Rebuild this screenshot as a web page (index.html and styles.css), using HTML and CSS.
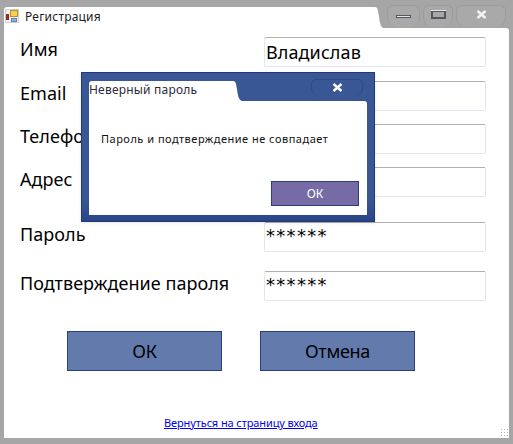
FILE: index.html
```html
<!DOCTYPE html>
<html lang="ru">
<head>
  <meta charset="UTF-8">
  <title>Регистрация</title>
  <link rel="stylesheet" href="styles.css">
</head>
<body>

<div class="window">
  <div class="titlebar">
    <div class="title">
      <svg class="app-icon" width="14" height="14" viewBox="0 0 14 14">
        <rect x="0.5" y="0.5" width="13" height="13" fill="#f4f4f4" stroke="#cfcfcf"/>
        <rect x="1.5" y="5.5" width="2" height="5" fill="#c8201a" stroke="#8a2a20"/>
        <rect x="5.5" y="1.5" width="7" height="6" fill="#f6cf55" stroke="#b8902b"/>
        <rect x="6.5" y="9.5" width="5" height="3" fill="#8fb2e8" stroke="#5f82c0"/>
      </svg>
      <span>Регистрация</span>
    </div>
    <svg class="tab-curve" width="8" height="21" viewBox="0 0 8 21">
      <path d="M0 0 C3 0 3 4 4 10 C5 17 6 20 8 21 L0 21 Z" fill="#fff"/>
    </svg>
    <div class="caption-buttons">
      <div class="caption-btn minimize">
        <svg width="15" height="3" viewBox="0 0 15 3"><rect x="0.5" y="0.5" width="14" height="2" fill="#e8e8ec" stroke="#55555f"/></svg>
      </div>
      <div class="caption-btn maximize">
        <svg width="15" height="9" viewBox="0 0 15 9"><rect x="1" y="1" width="13" height="7" fill="none" stroke="#55555f" stroke-width="2"/><rect x="0" y="0" width="15" height="1" fill="#e8e8ec"/></svg>
      </div>
      <div class="caption-btn close">
        <svg width="11" height="9" viewBox="0 0 11 9"><path d="M1.5 1 L9.5 8 M9.5 1 L1.5 8" stroke="#f4f4f4" stroke-width="2.4"/></svg>
      </div>
    </div>
  </div>

  <div class="content">
    <div class="row">
      <label>Имя</label>
      <input type="text" value="Владислав">
    </div>
    <div class="row row-email">
      <label>Email</label>
      <input type="text">
    </div>
    <div class="row">
      <label>Телефон</label>
      <input type="text">
    </div>
    <div class="row">
      <label>Адрес</label>
      <input type="text">
    </div>
    <div class="row row-password">
      <label>Пароль</label>
      <input class="secret" type="text" value="******">
    </div>
    <div class="row row-confirm">
      <label>Подтверждение пароля</label>
      <input class="secret" type="text" value="******">
    </div>

    <div class="actions">
      <button class="btn">ОК</button>
      <button class="btn">Отмена</button>
    </div>

    <a class="back-link" href="#">Вернуться на страницу входа</a>
  </div>
  <div class="grip"></div>

  <div class="dialog">
    <div class="dialog-head">
      <div class="dialog-title">Неверный пароль</div>
      <svg class="tab-curve" width="9" height="20" viewBox="0 0 9 20">
        <path d="M0 0 C3 0 3 3 4 8 C5 16 6 19 9 20 L0 20 Z" fill="#fff"/>
      </svg>
      <div class="dialog-close">
        <svg width="11" height="9" viewBox="0 0 11 9"><path d="M1.5 1 L9.5 8 M9.5 1 L1.5 8" stroke="#fff" stroke-width="2.4"/></svg>
      </div>
    </div>
    <div class="dialog-body">
      <p>Пароль и подтверждение не совпадает</p>
      <button class="dialog-ok">ОК</button>
    </div>
  </div>
</div>

</body>
</html>
```

FILE: styles.css
```css
* {
  box-sizing: border-box;
}

body {
  margin: 0;
  width: 513px;
  height: 444px;
  overflow: hidden;
  background: #a6a6a6;
  font-family: "DejaVu Sans", sans-serif;
}

.window {
  position: relative;
  width: 513px;
  height: 438px;
  padding: 7px 4px 0;
}

.titlebar {
  display: flex;
  height: 21px;
}

.title {
  display: flex;
  align-items: center;
  gap: 6px;
  width: 371px;
  padding: 0 0 3px 1px;
  background: #fff;
  border-radius: 3px 0 0 0;
  font-family: "Noto Sans", sans-serif;
  font-size: 12px;
  letter-spacing: 0.2px;
  color: #222;
}

.tab-curve {
  flex: none;
  display: block;
}

.caption-buttons {
  display: flex;
  gap: 3px;
  margin-left: 4px;
  margin-top: -2px;
}

.caption-btn {
  display: flex;
  justify-content: center;
  align-items: center;
  height: 22px;
  border: 1px solid #9c9c9c;
  border-bottom: none;
  border-radius: 6px 6px 10px 10px;
  background: #a9a9a9;
}

.minimize {
  width: 33px;
}

.maximize {
  width: 30px;
  padding-bottom: 4px;
}

.close {
  width: 50px;
  padding-bottom: 4px;
}

.content {
  height: 410px;
  padding: 9px 23px 0 16px;
  background: #fff;
  border-radius: 0 3px 0 0;
}

.row {
  display: flex;
  justify-content: space-between;
  height: 30px;
  margin-bottom: 13px;
}

.row label {
  font-family: "Noto Sans", sans-serif;
  font-size: 18px;
  line-height: 24px;
  letter-spacing: 0.05px;
  color: #000;
}

.row-email {
  margin-top: 14px;
}

.row-password {
  margin-top: 25px;
  margin-bottom: 19px;
}

.row input {
  width: 222px;
  height: 30px;
  padding: 0 2px 0 1px;
  border: 1px solid #e2e7ef;
  border-top-color: #b0b0b0;
  border-radius: 2px;
  background: #fff;
  font-family: "Noto Sans", sans-serif;
  font-size: 18px;
  letter-spacing: 0.1px;
  color: #000;
  outline: none;
}

.row input.secret {
  padding-bottom: 4px;
  letter-spacing: 1.3px;
  font-family: "DejaVu Sans", sans-serif;
}

.actions {
  display: flex;
  gap: 38px;
  margin-top: 30px;
  margin-left: 47px;
}

.btn {
  width: 155px;
  height: 40px;
  border: 1px solid #2a3f7c;
  background: #637aad;
  font-family: "Noto Sans", sans-serif;
  font-size: 18px;
  letter-spacing: -0.3px;
  color: #000;
}

.back-link {
  display: block;
  margin-top: 44px;
  margin-left: 144px;
  font-family: "Noto Sans", sans-serif;
  font-size: 11px;
  line-height: 16px;
  letter-spacing: -0.1px;
  color: #0000ee;
}

.grip {
  position: absolute;
  right: 5px;
  bottom: 2px;
  width: 8px;
  height: 8px;
  background: radial-gradient(circle, #b8b8b8 1px, transparent 1px) 0 0 / 3px 3px;
}

/* message box on top of the form */
.dialog {
  position: absolute;
  left: 81px;
  top: 72px;
  width: 294px;
  height: 150px;
  padding: 8px 7px 6px 7px;
  border: 1px solid #1f3a7a;
  background: linear-gradient(#3a5795 85%, #2b4688);
  box-shadow: 0 1px 3px rgba(0, 0, 0, 0.1);
}

.dialog-head {
  display: flex;
  height: 20px;
}

.dialog-title {
  width: 144px;
  background: #fff;
  border-radius: 3px 0 0 0;
  font-family: "Noto Sans", sans-serif;
  font-size: 12px;
  line-height: 17px;
  letter-spacing: 0.2px;
  color: #2b2b3a;
}

.dialog-close {
  display: flex;
  justify-content: center;
  align-items: center;
  width: 52px;
  height: 18px;
  margin-top: -2px;
  margin-left: 69px;
  border: 1px solid #2f4a86;
  border-bottom: none;
  border-radius: 5px 5px 9px 9px;
  padding-bottom: 2px;
}

.dialog-body {
  position: relative;
  height: 114px;
  background: #fff;
  border-radius: 0 3px 0 0;
  border-top: 1px solid #fff;
}

.dialog-body p {
  margin: 0;
  padding: 29px 0 0 12px;
  font-family: "Noto Sans", sans-serif;
  font-size: 11px;
  line-height: 16px;
  letter-spacing: 0.5px;
  color: #111;
}

.dialog-ok {
  position: absolute;
  right: 8px;
  bottom: 9px;
  width: 88px;
  height: 25px;
  border: 1px solid #2a3f7c;
  background: #776ba6;
  font-family: "Noto Sans", sans-serif;
  font-size: 12px;
  color: #fff;
}
```
